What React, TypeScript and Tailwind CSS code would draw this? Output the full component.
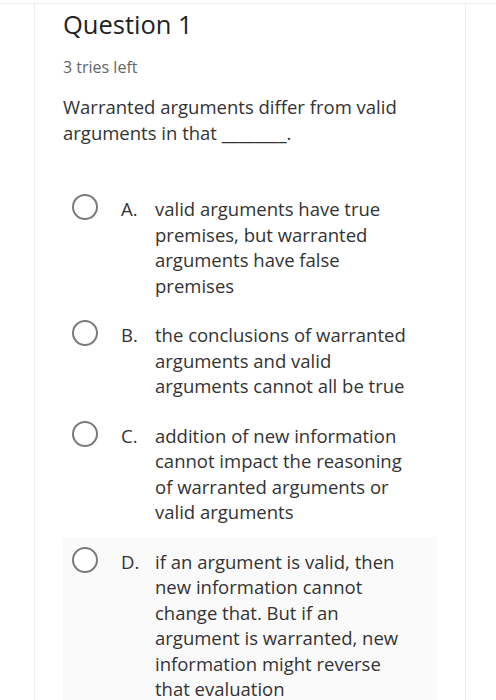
const options = [
  { letter: 'A.', text: 'valid arguments have true premises, but warranted arguments have false premises' },
  { letter: 'B.', text: 'the conclusions of warranted arguments and valid arguments cannot all be true' },
  { letter: 'C.', text: 'addition of new information cannot impact the reasoning of warranted arguments or valid arguments' },
  {
    letter: 'D.',
    text: 'if an argument is valid, then new information cannot change that. But if an argument is warranted, new information might reverse that evaluation',
    hover: true,
  },
];

export default function App() {
  return (
    <div className="min-h-[700px] bg-white pt-[3px] font-['Open_Sans',sans-serif] text-[#333]">
      <div className="border-t border-[#ececec]" />
      <div className="ml-[34px] w-[432px] min-h-[696px] border-x border-[#ececec] bg-white pl-[28px] pr-[28px] pt-[4px]">
        <h1 className="text-[25.5px] leading-[32px] text-[#222]">Question 1</h1>
        <p className="mt-[16px] text-[16px] leading-[22px] text-[#666]">3 tries left</p>
        <p className="mt-[16px] text-[18.5px] leading-[26px] text-[#333]">
          Warranted arguments differ from valid arguments in that ________.
        </p>

        <div className="mt-[38px] flex flex-col">
          {options.map((o) => (
            <div
              key={o.letter}
              className={`flex items-start py-[12px] ${o.hover ? 'bg-[#fafafa]' : ''}`}
            >
              <span className="ml-[9px] mt-[-2px] h-[26px] w-[26px] shrink-0 rounded-full border-2 border-[#7a7a7a] bg-white" />
              <span className="ml-[23px] w-[34px] shrink-0 text-[18.5px] leading-[25.5px]">{o.letter}</span>
              <span className="w-[262px] text-[18.5px] leading-[25.5px]">{o.text}</span>
            </div>
          ))}
        </div>
      </div>
    </div>
  );
}
